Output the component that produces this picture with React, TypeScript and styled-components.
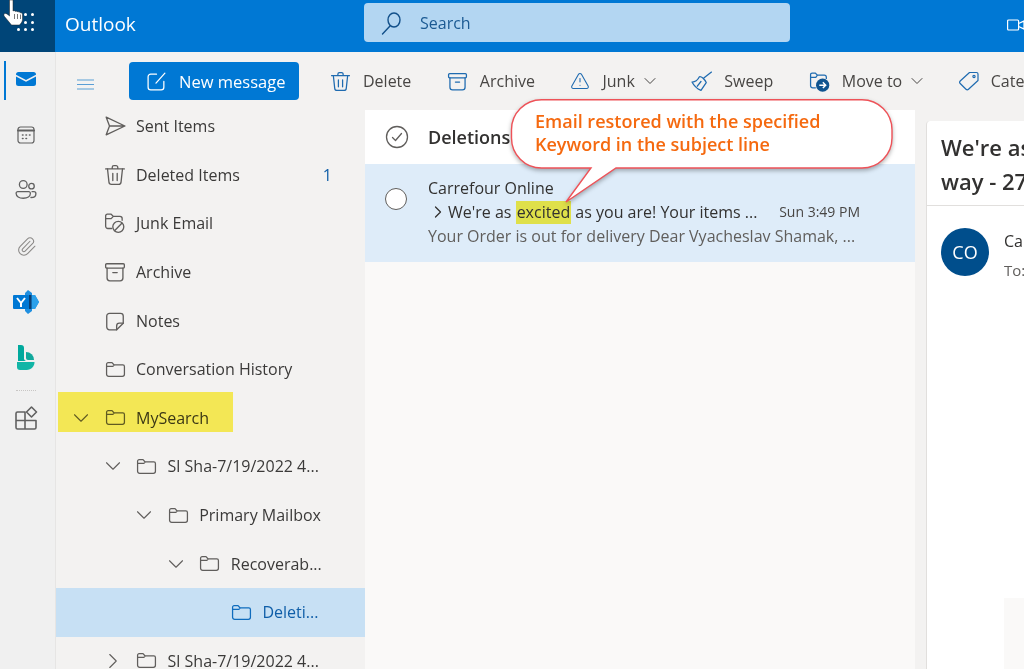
import React from "react";
import styled, { createGlobalStyle } from "styled-components";
import { ChevronDown, ChevronRight, Paperclip, TriangleAlert } from "lucide-react";

const GlobalStyle = createGlobalStyle`
  html, body { margin: 0; padding: 0; height: 100%; overflow: hidden; }
  body { font-family: "Open Sans", "Noto Sans", "Liberation Sans", sans-serif; color: #323130; background: #f3f2f1; }
  #root { height: 100%; }
`;

const Page = styled.div`
  position: relative;
  width: 1024px;
  height: 669px;
  overflow: hidden;
  display: flex;
  flex-direction: column;
`;

/* top bar */
const Header = styled.header`
  height: 52px;
  flex: none;
  display: flex;
  align-items: stretch;
  background: #0078d4;
  color: #fff;
`;
const Waffle = styled.div`
  width: 55px;
  flex: none;
  box-sizing: border-box;
  padding: 0 4px 8px 0;
  background: #004578;
  display: grid;
  grid-template-columns: repeat(3, 3px);
  grid-auto-rows: 3px;
  gap: 4.4px;
  justify-content: center;
  align-content: center;
`;
const Dot = styled.span`
  border-radius: 50%;
  background: #fff;
`;
const Brand = styled.div`
  width: 309px;
  flex: none;
  padding-left: 10px;
  box-sizing: border-box;
  font-size: 19px;
  font-weight: 500;
  line-height: 48px;
`;
const SearchBox = styled.div`
  width: 426px;
  height: 39px;
  margin-top: 3px;
  flex: none;
  box-sizing: border-box;
  padding-left: 16px;
  display: flex;
  align-items: center;
  gap: 18px;
  background: #b3d6f2;
  border-radius: 4px;
  color: #1b5a93;
  font-size: 16px;
`;
const MeetIcon = styled.div`
  margin-left: auto;
  display: flex;
  align-items: center;
  padding-bottom: 3px;
`;

/* body */
const Body = styled.div`
  flex: 1;
  min-height: 0;
  display: flex;
`;
const Rail = styled.nav`
  width: 56px;
  flex: none;
  box-sizing: border-box;
  background: #f0f0f0;
  border-right: 1px solid #e6e5e4;
  display: flex;
  flex-direction: column;
  align-items: center;
`;
const RailItem = styled.div<{ $active?: boolean }>`
  position: relative;
  width: 100%;
  height: 55.8px;
  flex: none;
  display: flex;
  align-items: center;
  justify-content: center;
  padding: 0 3px 2px 0;
  box-sizing: border-box;
  &::before {
    content: "";
    display: ${(p) => (p.$active ? "block" : "none")};
    position: absolute;
    left: 4px;
    top: 9px;
    bottom: 8px;
    width: 2px;
    background: #0078d4;
  }
`;
const RailDivider = styled.div`
  width: 20px;
  height: 0;
  margin: 3px 0 0 -3px;
  border-top: 1px dotted #c8c6c4;
`;

const Main = styled.div`
  flex: 1;
  min-width: 0;
  display: flex;
  flex-direction: column;
`;
const Toolbar = styled.div`
  height: 50px;
  flex: none;
  box-sizing: border-box;
  padding: 10px 0 2px 21px;
  display: flex;
  align-items: center;
  white-space: nowrap;
`;
const MenuIcon = styled.svg`
  flex: none;
  margin-top: 6px;
`;
const NewMessage = styled.button`
  width: 170px;
  height: 38px;
  flex: none;
  margin: 0 31px 0 35px;
  padding: 0 0 0 17px;
  display: flex;
  align-items: center;
  gap: 12px;
  border: 0;
  border-radius: 4px;
  background: #0078d4;
  color: #fff;
  font: inherit;
  font-size: 16.5px;
`;
const ToolItems = styled.div`
  flex: none;
  display: flex;
  align-items: center;
  gap: 35.5px;
`;
const ToolItem = styled.div`
  display: flex;
  align-items: center;
  gap: 12px;
  font-size: 16px;
  color: #484644;
`;
const ToolChevron = styled(ChevronDown)`
  margin: 0 -4px 0 -7px;
  color: #484644;
`;

const Content = styled.div`
  flex: 1;
  min-height: 0;
  display: flex;
`;
const FolderPane = styled.div`
  width: 309px;
  flex: none;
`;
const FolderRow = styled.div<{ $level: number; $selected?: boolean }>`
  position: relative;
  height: 48.6px;
  box-sizing: border-box;
  padding-left: ${(p) => 8 + p.$level * 31.6}px;
  display: flex;
  align-items: center;
  font-size: 16px;
  color: ${(p) => (p.$selected ? "#0f5ea8" : "#3b3a39")};
  background: ${(p) => (p.$selected ? "#c7e0f4" : "transparent")};
`;
const Twist = styled.span`
  width: 34px;
  flex: none;
  display: flex;
  justify-content: center;
  color: #605e5c;
`;
const FolderIcon = styled.span<{ $selected?: boolean }>`
  width: 34px;
  flex: none;
  display: flex;
  justify-content: center;
  color: ${(p) => (p.$selected ? "#0f6cbd" : "#605e5c")};
`;
const FolderLabel = styled.span`
  margin-left: 4px;
  white-space: nowrap;
`;
const Count = styled.span`
  position: absolute;
  right: 33px;
  color: #0f5ea8;
`;
const Marker = styled.div`
  position: absolute;
  left: 2px;
  top: -2px;
  width: 175px;
  height: 40px;
  background: #fff45a;
  mix-blend-mode: multiply;
`;

const ListPane = styled.section`
  width: 550px;
  flex: none;
  margin-top: 8px;
  background: #faf9f8;
`;
const ListHeader = styled.div`
  height: 54px;
  box-sizing: border-box;
  padding-left: 20px;
  display: flex;
  align-items: center;
  gap: 19px;
  background: #fff;
  font-size: 18px;
  font-weight: 600;
`;
const MailRow = styled.div`
  height: 98px;
  box-sizing: border-box;
  padding: 12px 55px 0 20px;
  display: flex;
  background: #deecf9;
`;
const RowCheck = styled.div`
  width: 24px;
  flex: none;
  margin: 12px 19px 0 0;
`;
const Radio = styled.div`
  width: 20px;
  height: 20px;
  border-radius: 50%;
  background: #fff;
  border: 1.5px solid #605e5c;
`;
const MailText = styled.div`
  flex: 1;
  min-width: 0;
  font-size: 16px;
  line-height: 24px;
  white-space: nowrap;
`;
const Subject = styled.div`
  display: flex;
  align-items: center;
`;
const SubjectChevron = styled(ChevronRight)`
  flex: none;
`;
const Keyword = styled.mark`
  display: inline-block;
  line-height: 23px;
  padding: 0 1px;
  background: #dfe04a;
  color: inherit;
`;
const Time = styled.span`
  margin-left: auto;
  font-size: 14px;
  color: #484644;
`;
const Preview = styled.div`
  color: #605e5c;
`;

const Reader = styled.section`
  flex: 1;
  min-width: 0;
  margin: 19px 0 0 11px;
  display: flex;
  flex-direction: column;
  background: #fff;
  border-left: 1px solid #e1dfdd;
  border-top-left-radius: 4px;
  white-space: nowrap;
`;
const ReaderSubject = styled.div`
  height: 85px;
  flex: none;
  box-sizing: border-box;
  padding: 9px 0 0 14px;
  font-size: 22px;
  font-weight: 600;
  line-height: 34px;
  color: #323130;
  border-bottom: 1px solid #e1dfdd;
`;
const MessageCard = styled.div`
  position: relative;
  flex: 1;
  padding: 22px 0 0 14px;
  display: flex;
  gap: 15px;
`;
const Avatar = styled.div`
  width: 48px;
  height: 48px;
  flex: none;
  display: flex;
  align-items: center;
  justify-content: center;
  border-radius: 50%;
  background: #004e8c;
  color: #fff;
  font-size: 18px;
`;
const Sender = styled.div`
  font-size: 16px;
  line-height: 27px;
`;
const Recipient = styled.div`
  font-size: 15px;
  line-height: 30px;
  color: #605e5c;
`;
const AdPatch = styled.div`
  position: absolute;
  right: 0;
  bottom: 0;
  width: 20px;
  height: 71px;
  background: #faf9f8;
`;

/* annotation over the page */
const Callout = styled.div`
  position: absolute;
  left: 511px;
  top: 99px;
  width: 382px;
  height: 105px;
`;
const CalloutShape = styled.svg`
  position: absolute;
  inset: 0;
  overflow: visible;
  filter: drop-shadow(0 2px 2px rgba(0, 0, 0, 0.3));
`;
const CalloutText = styled.div`
  position: relative;
  padding: 11px 0 0 24px;
  font-size: 18px;
  font-weight: 600;
  line-height: 23px;
  color: #f5690f;
`;
const HandCursor = styled.svg`
  position: absolute;
  left: 0;
  top: 0;
`;

type IconProps = { size?: number; color?: string };
const Svg = ({ size = 20, color = "currentColor", children }: IconProps & { children: React.ReactNode }) => (
  <svg width={size} height={size} viewBox="0 0 20 20" fill="none" stroke={color} strokeWidth="1.2" strokeLinecap="round" strokeLinejoin="round">
    {children}
  </svg>
);
const TrashIcon = (p: IconProps) => (
  <Svg {...p}>
    <path d="M1.500 4.500h17M7.500 4.500V3a1.500 1.500 0 0 1 1.500-1.500h2A1.500 1.500 0 0 1 12.500 3v1.500" />
    <path d="M3.200 4.500l1.300 12a2.200 2.200 0 0 0 2.200 2h6.600a2.200 2.200 0 0 0 2.200-2l1.300-12M8 8.500v6.500M12 8.500v6.500" />
  </Svg>
);
const ArchiveIcon = (p: IconProps) => (
  <Svg {...p}>
    <rect x="1.500" y="2.500" width="17" height="4" rx="1" />
    <path d="M2.800 6.500v9a2.500 2.500 0 0 0 2.500 2.500h9.400a2.500 2.500 0 0 0 2.500-2.500v-9M8 10.500h4" />
  </Svg>
);
const SendIcon = (p: IconProps) => (
  <Svg {...p}>
    <path d="M2 2L19 10L2 18L5 10L2 2zM5 10h14" />
  </Svg>
);
const JunkIcon = (p: IconProps) => (
  <Svg {...p}>
    <path d="M7 15H3.500a2 2 0 0 1-2-2V3.500A1.500 1.500 0 0 1 3 2h3.500l2 2h6a2 2 0 0 1 2 2v1.500M1.500 6h5l2-2" />
    <circle cx="13" cy="13.500" r="5" />
    <path d="M9.800 16.800l6.400-6.600" />
  </Svg>
);
const NoteIcon = (p: IconProps) => (
  <Svg {...p}>
    <path d="M11.500 18H5a2.500 2.500 0 0 1-2.500-2.500v-10A2.500 2.500 0 0 1 5 3h10a2.500 2.500 0 0 1 2.500 2.500V12L11.500 18z" />
    <path d="M11.500 18v-3.500a2.500 2.500 0 0 1 2.500-2.500h3.500" />
  </Svg>
);
const FolderGlyph = (p: IconProps) => (
  <Svg {...p}>
    <path d="M1.500 5a1.500 1.500 0 0 1 1.500-1.500h3.700l2 2.200h8.300A1.500 1.500 0 0 1 18.500 7.200v7.300a2 2 0 0 1-2 2h-13a2 2 0 0 1-2-2V5zM1.500 7h6l1.200-1.300" />
  </Svg>
);
const ComposeIcon = (p: IconProps) => (
  <Svg {...p}>
    <path d="M10 3H4.500A2.500 2.500 0 0 0 2 5.500v10A2.500 2.500 0 0 0 4.500 18h10a2.500 2.500 0 0 0 2.500-2.500V10M18 2L9.500 11.500" />
  </Svg>
);
const SweepIcon = (p: IconProps) => (
  <Svg {...p}>
    <path d="M19.500 1L12.500 6.500M8 5.500c1.800-.5 4.800 2 6.500 5.500L9.500 18.500c-3.500-1.500-6.500-4-8.500-8 3 0 5.500-2 7-5zM6 14.500l3.500-4.500" />
  </Svg>
);
const MoveIcon = (p: IconProps) => (
  <svg width={p.size ?? 20} height={p.size ?? 20} viewBox="0 0 20 20" fill="none" stroke={p.color} strokeWidth="1.200">
    <path d="M6.500 16H3.500a2 2 0 0 1-2-2V3.500A1.500 1.500 0 0 1 3 2h3l2 2h6.500a2 2 0 0 1 2 2v1.500M1.500 6h5l1.500-2" />
    <circle cx="13" cy="13.500" r="6.300" fill="#0f5490" stroke="none" />
    <path d="M9.800 13.500h6M13.200 10.800l2.700 2.700-2.700 2.700" stroke="#fff" strokeWidth="1.400" />
  </svg>
);
const TagIcon = (p: IconProps) => (
  <Svg {...p}>
    <path d="M19 3v6.500L9.500 18.300a1.800 1.800 0 0 1-2.500 0l-5.800-5.800a1.800 1.800 0 0 1 0-2.500L10.500 1.500H17.500A1.500 1.500 0 0 1 19 3z" />
    <circle cx="15" cy="5.500" r="1.100" />
  </Svg>
);
const SearchIcon = () => (
  <svg width="22" height="24" viewBox="0 0 22 24" fill="none" stroke="#12508a" strokeWidth="1.400" strokeLinecap="round">
    <ellipse cx="14" cy="9" rx="6" ry="7" />
    <path d="M10 15L2.500 23" />
  </svg>
);
const CircleCheck = () => (
  <svg width="24" height="24" viewBox="0 0 24 24" fill="none" stroke="#605e5c" strokeWidth="1.300" strokeLinecap="round" strokeLinejoin="round">
    <circle cx="12" cy="12" r="10.500" />
    <path d="M7.500 12.500l3 3 6-7" />
  </svg>
);

const MailRailIcon = () => (
  <svg width="20" height="20" viewBox="0 0 20 20">
    <path d="M0 5.500A2.500 2.500 0 0 1 2.500 3h15A2.500 2.500 0 0 1 20 5.500v.3L10 11 0 5.800v-.3z" fill="#0078d4" />
    <path d="M0 7.500l10 5.200 10-5.200v7A2.500 2.500 0 0 1 17.500 17h-15A2.500 2.500 0 0 1 0 14.500v-7z" fill="#0078d4" />
  </svg>
);
const CalendarRailIcon = () => (
  <Svg size={20} color="#616161">
    <rect x="2" y="2" width="16" height="16" rx="2.500" />
    <path d="M2 5.500h16" strokeWidth="2" />
    <path d="M6.500 10h.5M10 10h.5M13.500 10h.5M6.500 13.500h.5M10 13.500h.5" strokeWidth="1.600" />
  </Svg>
);
const PeopleRailIcon = () => (
  <Svg size={22} color="#616161">
    <circle cx="7.500" cy="5" r="3.500" />
    <circle cx="15" cy="6.500" r="2.500" />
    <path d="M2.500 11.500h10a1.500 1.500 0 0 1 1.500 1.500c0 2.800-2.800 4.500-6.500 4.500S1 15.800 1 13a1.500 1.500 0 0 1 1.500-1.500zM14.500 16.800c2.800 0 4.500-1.500 4.500-3.500a1.800 1.800 0 0 0-1.800-1.800h-1.700" />
  </Svg>
);
const ClipRailIcon = () => <Paperclip size={21} strokeWidth={1.2} color="#8a8886" />;
const YammerIcon = () => (
  <svg width="26" height="26" viewBox="0 0 26 26">
    <path d="M15 1l4 3v2h3l4 7-4 7h-3v2l-4 3-3-3V4z" fill="#1f8fe0" />
    <path d="M19 6h3l4 7-4 7h-3z" fill="#2ba0ea" />
    <rect x="0" y="6" width="16" height="14" rx="1" fill="#0078d4" />
    <path d="M16 6h2.500v14H16z" fill="#0b3f73" />
    <path d="M4 9l4 5 4-5M8 14v4" fill="none" stroke="#fff" strokeWidth="2" />
  </svg>
);
const BookingsIcon = () => (
  <svg width="18" height="26" viewBox="0 0 18 26">
    <path d="M1 0h3a3 3 0 0 1 3 3v11a3 3 0 0 0 2 2H1z" fill="#00a99d" />
    <path d="M9 7a8 8 0 0 1 8 8h-6a2 2 0 0 1-2-2z" fill="#11a89c" />
    <path d="M0 17h17.500c0 4-3 8-8 8H3a3 3 0 0 1-3-3z" fill="#12b5a6" />
  </svg>
);
const AppsIcon = () => (
  <svg width="24" height="24" viewBox="0 0 24 24" fill="none" stroke="#616161" strokeWidth="1.600" strokeLinejoin="round">
    <path d="M3.500 6H11v17H3.500A1.500 1.500 0 0 1 2 21.500v-14A1.500 1.500 0 0 1 3.500 6zM2 14.500h20v7a1.500 1.500 0 0 1-1.500 1.500H11" />
    <path d="M17.500 1l5 5-5 5-5-5z" />
  </svg>
);

type Folder = { label: string; level: number; icon: React.ReactNode; open?: boolean; closed?: boolean; count?: string; selected?: boolean; marked?: boolean };

const folderIcon = <FolderGlyph size={21} />;
const folders: Folder[] = [
  { label: "Sent Items", level: 0, icon: <SendIcon size={22} /> },
  { label: "Deleted Items", level: 0, icon: <TrashIcon size={22} />, count: "1" },
  { label: "Junk Email", level: 0, icon: <JunkIcon size={22} /> },
  { label: "Archive", level: 0, icon: <ArchiveIcon size={22} /> },
  { label: "Notes", level: 0, icon: <NoteIcon size={22} /> },
  { label: "Conversation History", level: 0, icon: folderIcon },
  { label: "MySearch", level: 0, icon: folderIcon, open: true, marked: true },
  { label: "Sl Sha-7/19/2022 4...", level: 1, icon: folderIcon, open: true },
  { label: "Primary Mailbox", level: 2, icon: folderIcon, open: true },
  { label: "Recoverab...", level: 3, icon: folderIcon, open: true },
  { label: "Deleti...", level: 4, icon: folderIcon, selected: true },
  { label: "Sl Sha-7/19/2022 4...", level: 1, icon: folderIcon, closed: true },
];

const railItems = [
  { icon: <MailRailIcon />, active: true },
  { icon: <CalendarRailIcon /> },
  { icon: <PeopleRailIcon /> },
  { icon: <ClipRailIcon /> },
  { icon: <YammerIcon /> },
  { icon: <BookingsIcon /> },
];

const blue = "#1f6bb0";

export default function App() {
  return (
    <Page>
      <GlobalStyle />
      <Header>
        <Waffle>
          {Array.from({ length: 9 }).map((_, i) => (
            <Dot key={i} />
          ))}
        </Waffle>
        <Brand>Outlook</Brand>
        <SearchBox>
          <SearchIcon />
          Search
        </SearchBox>
        <MeetIcon>
          <svg width="17" height="12" viewBox="0 0 17 12" fill="none" stroke="#fff" strokeWidth="1.200">
            <rect x="0.600" y="1" width="11" height="10" rx="1" />
            <path d="M11.600 4.500L17 2v8l-5.400-2.500" />
          </svg>
        </MeetIcon>
      </Header>
      <Body>
        <Rail>
          {railItems.map((item, i) => (
            <RailItem key={i} $active={item.active}>
              {item.icon}
            </RailItem>
          ))}
          <RailDivider />
          <RailItem>
            <AppsIcon />
          </RailItem>
        </Rail>
        <Main>
          <Toolbar>
            <MenuIcon width="17" height="11" viewBox="0 0 17 11" stroke="#5a9fd6" strokeWidth="1.200">
              <path d="M0 1h17M0 5.500h17M0 10h17" />
            </MenuIcon>
            <NewMessage>
              <ComposeIcon size={21} color="#fff" />
              New message
            </NewMessage>
            <ToolItems>
              <ToolItem>
                <TrashIcon size={21} color={blue} />
                Delete
              </ToolItem>
              <ToolItem>
                <ArchiveIcon size={21} color={blue} />
                Archive
              </ToolItem>
              <ToolItem>
                <TriangleAlert size={20} strokeWidth={1.3} color={blue} />
                Junk
                <ToolChevron size={20} strokeWidth={1.2} />
              </ToolItem>
              <ToolItem>
                <SweepIcon size={21} color={blue} />
                Sweep
              </ToolItem>
              <ToolItem>
                <MoveIcon size={21} color={blue} />
                Move to
                <ToolChevron size={20} strokeWidth={1.2} />
              </ToolItem>
              <ToolItem>
                <TagIcon size={20} color={blue} />
                Categorize
              </ToolItem>
            </ToolItems>
          </Toolbar>
          <Content>
            <FolderPane>
              {folders.map((f, i) => (
                <FolderRow key={i} $level={f.level} $selected={f.selected}>
                  {f.marked && <Marker />}
                  <Twist>
                    {f.open && <ChevronDown size={26} strokeWidth={1} />}
                    {f.closed && <ChevronRight size={26} strokeWidth={1} />}
                  </Twist>
                  <FolderIcon $selected={f.selected}>{f.icon}</FolderIcon>
                  <FolderLabel>{f.label}</FolderLabel>
                  {f.count && <Count>{f.count}</Count>}
                </FolderRow>
              ))}
            </FolderPane>
            <ListPane>
              <ListHeader>
                <CircleCheck />
                Deletions
              </ListHeader>
              <MailRow>
                <RowCheck>
                  <Radio />
                </RowCheck>
                <MailText>
                  <div>Carrefour Online</div>
                  <Subject>
                    <SubjectChevron size={20} strokeWidth={1.5} />
                    <span>
                      We're as <Keyword>excited</Keyword> as you are! Your items ...
                    </span>
                    <Time>Sun 3:49 PM</Time>
                  </Subject>
                  <Preview>Your Order is out for delivery Dear Vyacheslav Shamak, ...</Preview>
                </MailText>
              </MailRow>
            </ListPane>
            <Reader>
              <ReaderSubject>
                We're as excited as you are! Your items are on their
                <br />
                way - 27
              </ReaderSubject>
              <MessageCard>
                <Avatar>CO</Avatar>
                <div>
                  <Sender>Carrefour Online</Sender>
                  <Recipient>To: Vyacheslav Shamak</Recipient>
                </div>
                <AdPatch />
              </MessageCard>
            </Reader>
          </Content>
        </Main>
      </Body>
      <Callout>
        <CalloutShape width="382" height="105" viewBox="0 0 382 105">
          <path
            d="M30.500 0.700H351a30 30 0 0 1 30 30V39a30 30 0 0 1-30 30H105L55 103L80 69H30.500a30 30 0 0 1-30-30V30.700a30 30 0 0 1 30-30z"
            fill="#fff"
            stroke="#ee5258"
            strokeWidth="1.400"
          />
        </CalloutShape>
        <CalloutText>
          Email restored with the specified
          <br />
          Keyword in the subject line
        </CalloutText>
      </Callout>
      <HandCursor width="26" height="28" viewBox="0 0 26 28">
        <path
          d="M9.500 0h3.500v11c1-.6 2-.3 2.500.4.800-.4 1.800-.2 2.300.6.800-.4 2-.1 2.500.8.800-.2 2.200.2 2.200 1.700v5c0 2-1.200 3.500-3 5.500H11.500L4.500 16.500c-1-1.200-.8-2.600.3-3 1-.4 2.800.4 4.700 2.500V0z"
          fill="#fff"
          stroke="#222"
          strokeWidth="0.500"
        />
        <path d="M14.500 14v5M17.500 14v5M20.500 14.500v4.500" stroke="#555" strokeWidth="0.800" />
      </HandCursor>
    </Page>
  );
}
